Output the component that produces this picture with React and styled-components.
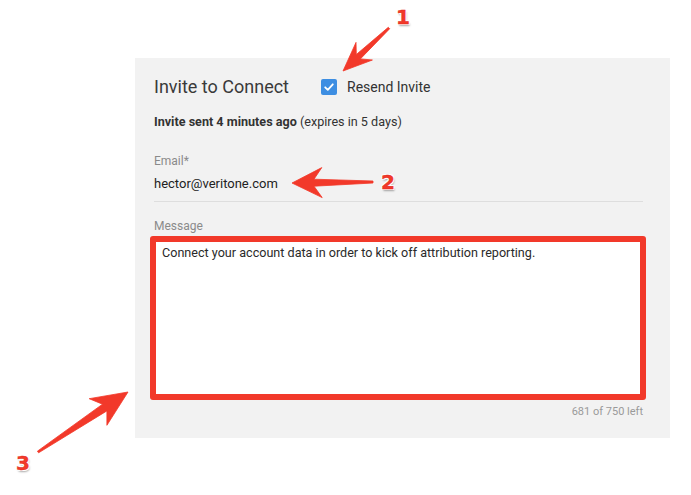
import React from 'react';
import styled, { createGlobalStyle } from 'styled-components';

const GlobalStyle = createGlobalStyle`
  html, body {
    margin: 0;
    padding: 0;
    background: #ffffff;
  }
  body {
    font-family: Roboto, "Liberation Sans", Arial, sans-serif;
  }
`;

// builds a tapered arrow polygon from tail to tip
function arrowPoints([tx, ty], [px, py], { headLen, headHalf, w0, w1 }) {
  const len = Math.hypot(px - tx, py - ty);
  const ux = (px - tx) / len;
  const uy = (py - ty) / len;
  const nx = -uy;
  const ny = ux;
  const bx = px - ux * headLen;
  const by = py - uy * headLen;
  const pts = [
    [tx + (nx * w0) / 2, ty + (ny * w0) / 2],
    [bx + ux * 3 + (nx * w1) / 2, by + uy * 3 + (ny * w1) / 2],
    [bx - ux * 5 + nx * headHalf, by - uy * 5 + ny * headHalf],
    [px, py],
    [bx - ux * 5 - nx * headHalf, by - uy * 5 - ny * headHalf],
    [bx + ux * 3 - (nx * w1) / 2, by + uy * 3 - (ny * w1) / 2],
    [tx - (nx * w0) / 2, ty - (ny * w0) / 2],
  ];
  return pts.map((p) => p.map((v) => v.toFixed(1)).join(',')).join(' ');
}

const arrows = [
  { tail: [389, 28], tip: [343, 71], opts: { headLen: 24, headHalf: 12, w0: 2, w1: 6 } },
  { tail: [373, 182], tip: [292, 183], opts: { headLen: 25, headHalf: 15, w0: 2, w1: 7 } },
  { tail: [38, 452], tip: [128, 392], opts: { headLen: 31, headHalf: 16, w0: 2, w1: 8 } },
];

const badges = [
  { n: '1', x: 396, y: 6 },
  { n: '2', x: 381, y: 171 },
  { n: '3', x: 16, y: 452 },
];

class App extends React.Component {
  render() {
    return (
      <Page>
        <GlobalStyle />
        <Panel>
          <Header>
            <Title>Invite to Connect</Title>
            <CheckRow>
              <Check>
                <svg width="12" height="12" viewBox="0 0 12 12">
                  <path d="M2.2 6.3 L4.8 8.8 L9.8 3.3" fill="none" stroke="#fff" strokeWidth="1.8" strokeLinecap="round" strokeLinejoin="round" />
                </svg>
              </Check>
              <CheckLabel>Resend Invite</CheckLabel>
            </CheckRow>
          </Header>
          <Status>
            <b>Invite sent 4 minutes ago</b> (expires in 5 days)
          </Status>
          <FieldLabel top={23}>Email*</FieldLabel>
          <EmailValue>hector@veritone.com</EmailValue>
          <FieldLabel top={16}>Message</FieldLabel>
          <MessageBox>
            Connect your account data in order to kick off attribution reporting.
          </MessageBox>
          <Counter>681 of 750 left</Counter>
        </Panel>

        <Overlay width="691" height="495" viewBox="0 0 691 495">
          {arrows.map((a, i) => (
            <polygon key={i} points={arrowPoints(a.tail, a.tip, a.opts)} fill="#f2392a" stroke="#f2392a" strokeWidth="0.8" strokeLinejoin="round" />
          ))}
        </Overlay>
        {badges.map((b) => (
          <Badge key={b.n} style={{ left: b.x, top: b.y }}>{b.n}</Badge>
        ))}
      </Page>
    );
  }
}

const Page = styled.div`
  position: relative;
  width: 691px;
  height: 495px;
  overflow: hidden;
  background: #ffffff;
  padding-top: 58px;
  box-sizing: border-box;
`;

const Panel = styled.div`
  margin-left: 135px;
  width: 535px;
  height: 380px;
  box-sizing: border-box;
  background: #f2f2f2;
  padding: 17px 27px 19px 19px;
  display: flex;
  flex-direction: column;
`;

const Header = styled.div`
  display: flex;
  align-items: center;
  height: 24px;
`;

const Title = styled.div`
  font-size: 18px;
  color: #3a3a3a;
  line-height: 24px;
  margin-right: 32px;
`;

const CheckRow = styled.div`
  display: flex;
  align-items: center;
  gap: 10px;
`;

const Check = styled.span`
  width: 16px;
  height: 16px;
  border-radius: 2px;
  background: #3d8ee2;
  display: flex;
  align-items: center;
  justify-content: center;
`;

const CheckLabel = styled.span`
  font-size: 14px;
  color: #333;
  line-height: 24px;
`;

const Status = styled.div`
  margin-top: 15px;
  font-size: 12.6px;
  line-height: 16px;
  color: #333;
  b {
    font-weight: 700;
  }
`;

const FieldLabel = styled.div`
  margin-top: ${(p) => p.top}px;
  font-size: 12px;
  line-height: 16px;
  color: #8a8a8a;
`;

const EmailValue = styled.div`
  margin-top: 6px;
  font-size: 13px;
  line-height: 18px;
  color: #222;
  padding-bottom: 8px;
  border-bottom: 1px solid #dedede;
`;

const MessageBox = styled.div`
  margin: 2px -3px 0 -4px;
  height: 164px;
  box-sizing: border-box;
  border: 6px solid #f2392a;
  border-radius: 3px;
  background: #ffffff;
  padding: 3px 6px;
  font-size: 12.6px;
  line-height: 16px;
  color: #2a2a2a;
`;

const Counter = styled.div`
  margin-top: 5px;
  text-align: right;
  font-size: 11px;
  line-height: 14px;
  color: #9a9a9a;
`;

const Overlay = styled.svg`
  position: absolute;
  left: 0;
  top: 0;
  pointer-events: none;
`;

const Badge = styled.span`
  position: absolute;
  font-family: "DejaVu Sans", "Liberation Sans", Arial, sans-serif;
  font-weight: 700;
  font-size: 20px;
  line-height: 22px;
  color: #f2392a;
  -webkit-text-stroke: 0.4px #e0281a;
  text-shadow: 0 0 2px #fff, 1px 1px 0 #fff, -1px -1px 0 #fff, 1px -1px 0 #fff, -1px 1px 0 #fff, 1px 2px 2px rgba(0, 0, 0, 0.35);
`;

export default App;
